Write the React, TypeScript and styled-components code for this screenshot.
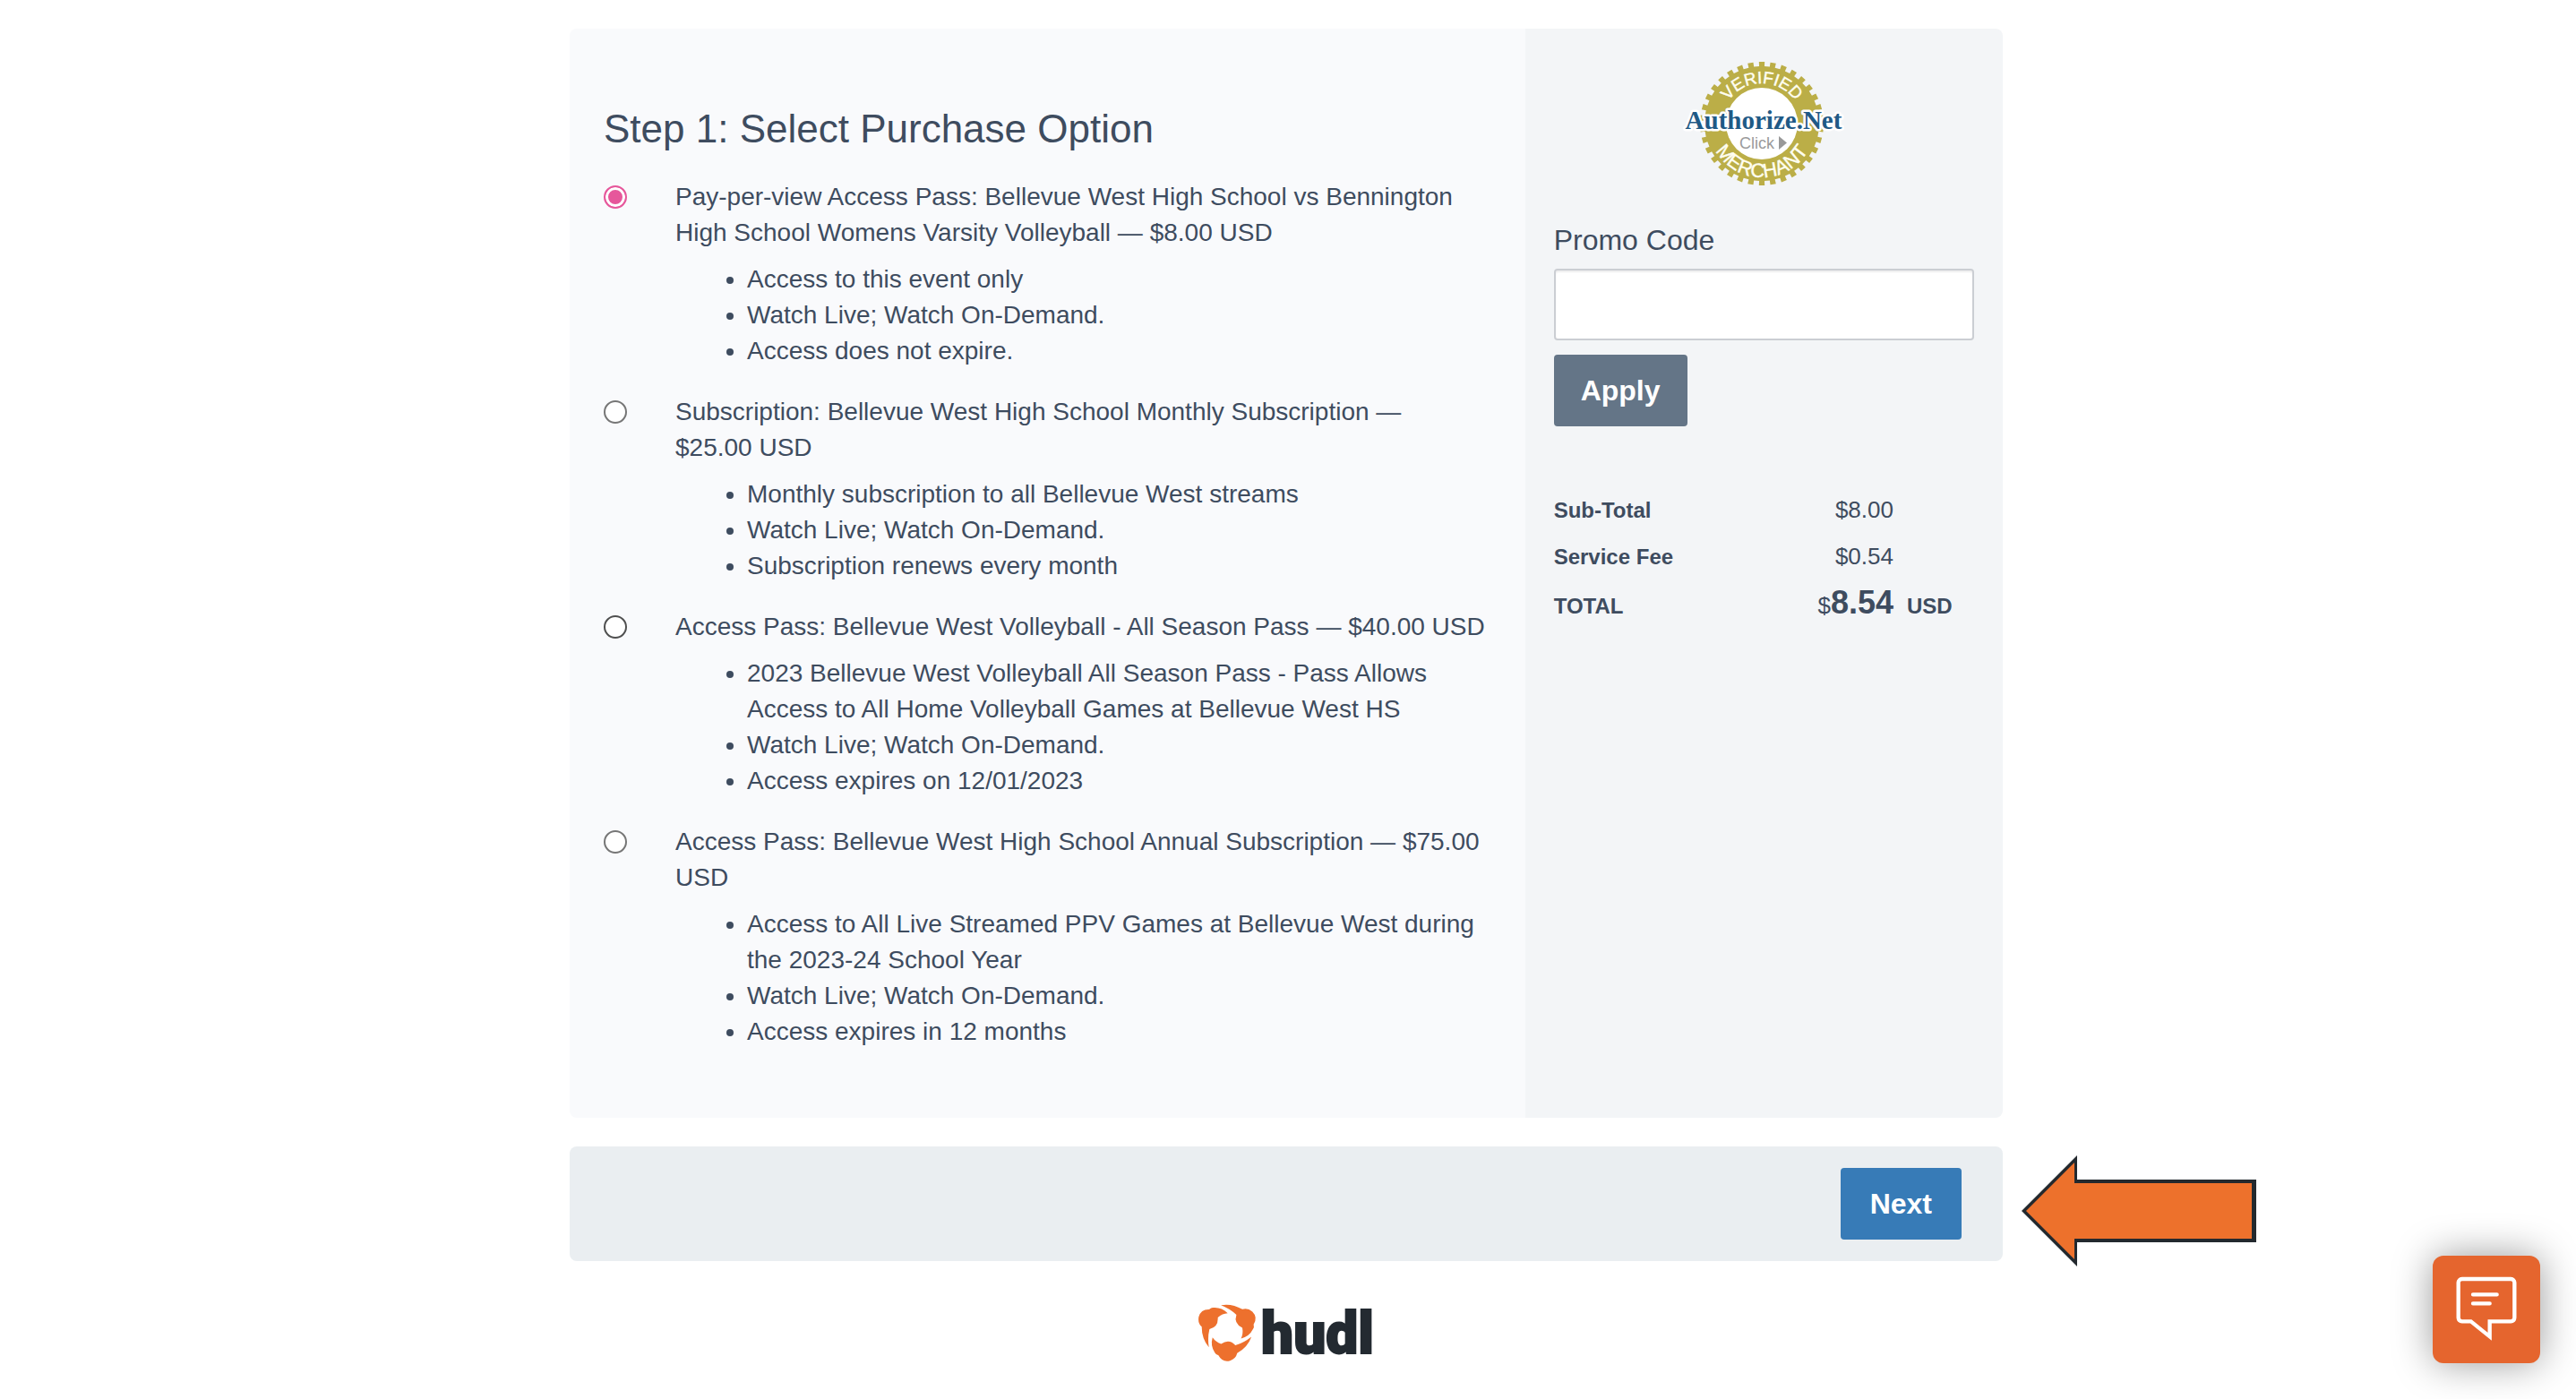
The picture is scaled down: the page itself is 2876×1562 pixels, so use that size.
import React, { useState } from "react";
import styled, { createGlobalStyle } from "styled-components";

const sans = `"Liberation Sans", Arial, sans-serif`;
const ink = "#3e4c5f";

const GlobalStyle = createGlobalStyle`
  *, *::before, *::after { box-sizing: border-box; }
  body {
    margin: 0;
    padding-right: 4px;
    background: #fff;
    color: ${ink};
    font-family: ${sans};
    font-size: 28px;
    line-height: 40px;
    overflow-x: hidden;
  }
`;

const Page = styled.form`
  width: 100%;
  max-width: 1600px;
  margin: 0 auto;
  padding-top: 32px;
  display: flex;
  flex-direction: column;
  gap: 32px;
`;

const Checkout = styled.div`
  display: grid;
  grid-template-columns: 2fr 1fr;
  border-radius: 8px;
  overflow: hidden;
`;

const Options = styled.section`
  background: #f9fafc;
  padding: 88px 38px 76px;
`;

const Title = styled.h1`
  margin: 0 0 32px;
  font-size: 44px;
  line-height: 48px;
  font-weight: 400;
`;

const OptionList = styled.div`
  display: flex;
  flex-direction: column;
  gap: 28px;
`;

const Option = styled.div`
  display: grid;
  grid-template-columns: 80px 1fr;
  align-items: start;
`;

const Radio = styled.input<{ $dark?: boolean }>`
  appearance: none;
  width: 26px;
  height: 26px;
  margin: 7px 0 0;
  border: 2px solid ${(p) => (p.$dark ? "#4f4f4f" : "#767676")};
  border-radius: 50%;
  background: #fff;

  &:checked {
    border-color: #e6579b;
    background: #e6579b;
    box-shadow: inset 0 0 0 3px #fff;
  }
`;

const OptionLabel = styled.label`
  display: block;
`;

const Details = styled.ul`
  margin: 12px 0 0;
  padding: 0 0 0 80px;
`;

const Summary = styled.aside`
  background: #f3f5f7;
  padding: 37px 32px;
  display: flex;
  flex-direction: column;
  align-items: flex-start;
`;

const SealLink = styled.a`
  align-self: center;
  display: block;
  height: 140px;

  svg { display: block; }
`;

const PromoLabel = styled.label`
  margin-top: 39px;
  font-size: 32px;
  line-height: 40px;
`;

const PromoInput = styled.input`
  width: 100%;
  height: 80px;
  margin: 12px 0 16px;
  padding: 12px 24px;
  border: 2px solid #cbced3;
  border-radius: 4px;
  background: #fff;
  box-shadow: inset 0 2px 2px rgba(0, 0, 0, 0.07);
  color: ${ink};
  font: 32px ${sans};
`;

const Button = styled.button<{ $tone: string; $pad: number }>`
  height: 80px;
  padding: 0 ${(p) => p.$pad}px;
  border: 0;
  border-radius: 4px;
  background: ${(p) => p.$tone};
  color: #fff;
  font: bold 32px/40px ${sans};
  cursor: pointer;
`;

const Totals = styled.table`
  width: 100%;
  margin-top: 73px;
  border-collapse: collapse;
  font-size: 26px;

  th, td {
    height: 52px;
    padding: 0;
    vertical-align: baseline;
  }
  th {
    text-align: left;
    font-size: 24px;
  }
`;

const Amount = styled.td`
  text-align: right;

  strong { font-size: 36px; }
`;

const Currency = styled.td`
  width: 90px;
  font-size: 24px;
  font-weight: bold;
`;

const CurrencyCode = styled.span`
  margin-left: 15px;
`;

const ActionBar = styled.div`
  position: relative;
  display: flex;
  justify-content: flex-end;
  padding: 24px 46px;
  border-radius: 8px;
  background: #eaeef1;
`;

const Pointer = styled.svg`
  position: absolute;
  left: calc(100% + 21px);
  top: 10px;
`;

const Footer = styled.footer`
  display: flex;
  justify-content: center;
  padding-top: 4px;
`;

const BrandLink = styled.a`
  display: block;

  svg { display: block; }
`;

const ChatButton = styled.button`
  position: fixed;
  right: 40px;
  bottom: 40px;
  width: 120px;
  height: 120px;
  padding: 0;
  border: 0;
  border-radius: 12px;
  background: #e5652e;
  box-shadow: 0 0 44px rgba(0, 0, 0, 0.4);
  cursor: pointer;

  svg { display: block; }
`;

const options = [
  {
    id: "ppv",
    label:
      "Pay-per-view Access Pass: Bellevue West High School vs Bennington High School Womens Varsity Volleyball — $8.00 USD",
    details: ["Access to this event only", "Watch Live; Watch On-Demand.", "Access does not expire."],
  },
  {
    id: "monthly",
    label: "Subscription: Bellevue West High School Monthly Subscription — $25.00\u00a0USD",
    details: [
      "Monthly subscription to all Bellevue West streams",
      "Watch Live; Watch On-Demand.",
      "Subscription renews every month",
    ],
  },
  {
    id: "season",
    label: "Access Pass: Bellevue West Volleyball - All Season Pass — $40.00 USD",
    dark: true,
    details: [
      "2023 Bellevue West Volleyball All Season Pass - Pass Allows Access to All Home Volleyball Games at Bellevue West HS",
      "Watch Live; Watch On-Demand.",
      "Access expires on 12/01/2023",
    ],
  },
  {
    id: "annual",
    label: "Access Pass: Bellevue West High School Annual Subscription — $75.00 USD",
    details: [
      "Access to All Live Streamed PPV Games at Bellevue West during the 2023-24 School Year",
      "Watch Live; Watch On-Demand.",
      "Access expires in 12 months",
    ],
  },
];

const TEETH = 34;

/** Gear outline around (88, 69): each tooth spans half of its step. */
const gearPoints = Array.from({ length: TEETH }, (_, i) => {
  const step = (Math.PI * 2) / TEETH;
  const start = i * step - Math.PI / 2 - step / 4;
  return [
    [start, 64],
    [start, 69],
    [start + step / 2, 69],
    [start + step / 2, 64],
  ]
    .map(([a, r]) => `${(88 + r * Math.cos(a)).toFixed(2)},${(69 + r * Math.sin(a)).toFixed(2)}`)
    .join(" ");
}).join(" ");

function Seal() {
  return (
    <svg width="180" height="140" viewBox="0 0 180 140" role="img" aria-label="Authorize.Net verified merchant">
      <defs>
        <path id="seal-top" d="M43 69a45 45 0 0 1 90 0" />
        <path id="seal-bottom" d="M28 69a60 60 0 0 0 120 0" />
      </defs>
      <polygon points={gearPoints} fill="#bbae47" />
      <circle cx="88" cy="69" r="40" fill="#fff" />
      <g fill="#fffef0" stroke="#fffef0" strokeWidth="0.4" fontFamily={sans} textAnchor="middle">
        <text fontSize="19">
          <textPath href="#seal-top" startOffset="50%">VERIFIED</textPath>
        </text>
        <text fontSize="22">
          <textPath href="#seal-bottom" startOffset="50%">MERCHANT</textPath>
        </text>
      </g>
      <text
        x="90"
        y="75"
        textAnchor="middle"
        fontFamily={`"Liberation Serif", "Times New Roman", serif`}
        fontWeight="bold"
        fontSize="29"
        fill="#1f5a86"
        stroke="#fff"
        strokeWidth="5"
        strokeLinejoin="round"
        paintOrder="stroke"
      >
        Authorize.Net
      </text>
      <text x="63" y="97" fontFamily={sans} fontSize="18" fill="#9b9b9b">
        Click
      </text>
      <path d="M107 83v15l9-7.500z" fill="#999" />
    </svg>
  );
}

const swirl =
  "M104 60Q132 58 152 79Q134 80 119 93Q121 126 91 132Q84 160 89 193Q65 165 65 124Q51 111 55 91Q62 65 90 66Q97 59 104 60Z";

function HudlLogo() {
  return (
    <svg width="196" height="88" viewBox="0 -12 196 88" role="img" aria-label="hudl">
      <g transform="scale(0.3333) translate(-54 -48)" fill="#ed702d">
        <path d={swirl} />
        <path d={swirl} transform="rotate(120 150 134)" />
        <path d={swirl} transform="rotate(240 150 134)" />
      </g>
      <text
        x="70"
        y="55"
        fontFamily="Roboto, sans-serif"
        fontWeight="900"
        fontSize="64"
        fill="#232a31"
        stroke="#232a31"
        strokeWidth="2"
      >
        hudl
      </text>
    </svg>
  );
}

export default function App() {
  const [selected, setSelected] = useState("ppv");
  const [promo, setPromo] = useState("");

  return (
    <>
      <GlobalStyle />
      <Page onSubmit={(e) => e.preventDefault()}>
        <Checkout>
          <Options>
            <Title>Step 1: Select Purchase Option</Title>
            <OptionList role="radiogroup" aria-label="Purchase option">
              {options.map((o) => (
                <Option key={o.id}>
                  <Radio
                    type="radio"
                    name="option"
                    id={o.id}
                    $dark={o.dark}
                    checked={selected === o.id}
                    onChange={() => setSelected(o.id)}
                  />
                  <div>
                    <OptionLabel htmlFor={o.id}>{o.label}</OptionLabel>
                    <Details>
                      {o.details.map((d) => (
                        <li key={d}>{d}</li>
                      ))}
                    </Details>
                  </div>
                </Option>
              ))}
            </OptionList>
          </Options>
          <Summary>
            <SealLink href="#verify">
              <Seal />
            </SealLink>
            <PromoLabel htmlFor="promo">Promo Code</PromoLabel>
            <PromoInput id="promo" type="text" value={promo} onChange={(e) => setPromo(e.target.value)} />
            <Button type="button" $tone="#647587" $pad={30}>
              Apply
            </Button>
            <Totals>
              <tbody>
                <tr>
                  <th scope="row">Sub-Total</th>
                  <Amount>$8.00</Amount>
                  <Currency />
                </tr>
                <tr>
                  <th scope="row">Service Fee</th>
                  <Amount>$0.54</Amount>
                  <Currency />
                </tr>
                <tr>
                  <th scope="row">TOTAL</th>
                  <Amount>
                    $<strong>8.54</strong>
                  </Amount>
                  <Currency>
                    <CurrencyCode>USD</CurrencyCode>
                  </Currency>
                </tr>
              </tbody>
            </Totals>
          </Summary>
        </Checkout>
        <ActionBar>
          <Button type="submit" $tone="#377bb7" $pad={33}>
            Next
          </Button>
          <Pointer width="264" height="124" viewBox="0 0 264 124" aria-hidden="true">
            <path d="M0 62L62 0V27H262V97H62V124Z" fill="#23292e" />
            <path d="M5 62L59 8V31H257V93H59V116Z" fill="#ed712c" />
          </Pointer>
        </ActionBar>
        <Footer>
          <BrandLink href="#home">
            <HudlLogo />
          </BrandLink>
        </Footer>
      </Page>
      <ChatButton type="button" aria-label="Chat">
        <svg width="120" height="120" viewBox="0 0 360 360" fill="none" stroke="#fff" strokeWidth="13">
          <path d="M128 220H98a12 12 0 0 1-12-12V90a12 12 0 0 1 12-12H262a12 12 0 0 1 12 12V208a12 12 0 0 1-12 12H191V271Z" />
          <path d="M135 130H215M135 160H191" strokeLinecap="round" />
        </svg>
      </ChatButton>
    </>
  );
}
